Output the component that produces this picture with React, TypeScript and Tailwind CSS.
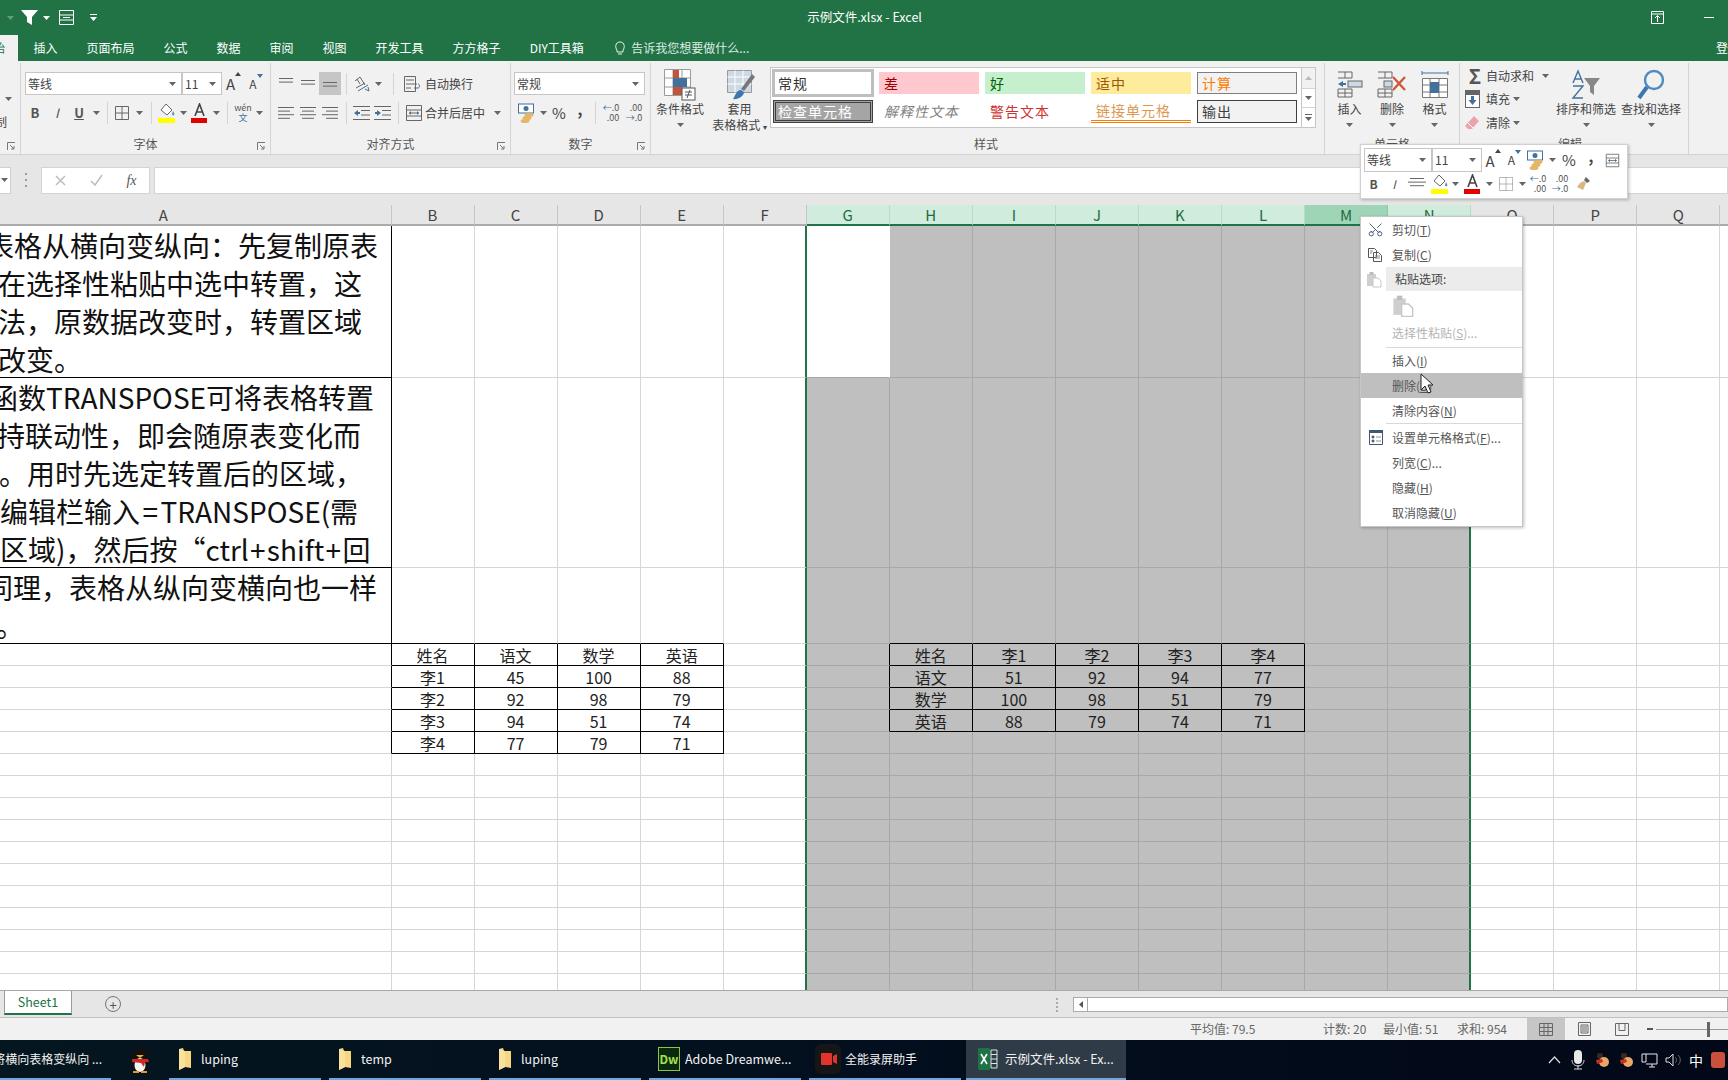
import { ReactNode } from 'react'
import { Scissors } from 'lucide-react'

const COLS = ['A', 'B', 'C', 'D', 'E', 'F', 'G', 'H', 'I', 'J', 'K', 'L', 'M', 'N', 'O', 'P', 'Q', 'R']
const GRID = 'grid grid-cols-[391.5px_repeat(17,83.05px)]'

const rowHeights = [
  'h-[152px]', 'h-[189.5px]', 'h-[76px]',
  ...Array.from({ length: 16 }, () => 'h-[22.05px]'),
]

const Eq = ({ c }: { c: string }) => <span className="mx-[1.25px]">{c}</span>

const cellLines: { text: ReactNode; ml: string }[][] = [
  [
    { text: '表格从横向变纵向：先复制原表', ml: '-ml-[14px]' },
    { text: '在选择性粘贴中选中转置，这', ml: '-ml-[2px]' },
    { text: '法，原数据改变时，转置区域', ml: '-ml-[2px]' },
    { text: '改变。', ml: '-ml-[2px]' },
  ],
  [
    { text: '函数TRANSPOSE可将表格转置', ml: '-ml-[10px]' },
    { text: '持联动性，即会随原表变化而', ml: '-ml-[3px]' },
    { text: '。用时先选定转置后的区域，', ml: '-ml-[1px]' },
    { text: <>编辑栏输入<span className="mx-[2.5px]">=</span>TRANSPOSE(需</>, ml: 'ml-0' },
    { text: <>区域)，然后按“ctrl<Eq c="+" />shift<Eq c="+" />回</>, ml: 'ml-0' },
  ],
  [
    { text: '同理，表格从纵向变横向也一样', ml: '-ml-[15px]' },
    { text: '。', ml: '-ml-[4px]' },
  ],
]

// row index -> col index -> text
const tableText: Record<number, Record<number, string>> = {
  3: { 1: '姓名', 2: '语文', 3: '数学', 4: '英语', 7: '姓名', 8: '李1', 9: '李2', 10: '李3', 11: '李4' },
  4: { 1: '李1', 2: '45', 3: '100', 4: '88', 7: '语文', 8: '51', 9: '92', 10: '94', 11: '77' },
  5: { 1: '李2', 2: '92', 3: '98', 4: '79', 7: '数学', 8: '100', 9: '98', 10: '51', 11: '79' },
  6: { 1: '李3', 2: '94', 3: '51', 4: '74', 7: '英语', 8: '88', 9: '79', 10: '74', 11: '71' },
  7: { 1: '李4', 2: '77', 3: '79', 4: '71' },
}

const inLeft = (r: number, c: number) => r >= 3 && r <= 7 && c >= 1 && c <= 4
const inRight = (r: number, c: number) => r >= 3 && r <= 6 && c >= 7 && c <= 11

function cellClass(r: number, c: number) {
  const sel = c >= 6 && c <= 13
  const active = r === 0 && c === 6
  const bg = active ? 'bg-white' : sel ? 'bg-[#bfbfbf]' : 'bg-white'

  let right = sel ? 'border-r border-r-[#a8a8a8]' : 'border-r border-r-[#d6d6d6]'
  if (active) right = 'border-r border-r-white'
  if (c === 0 && r <= 7) right = 'border-r border-r-black'
  if (inLeft(r, c) || inRight(r, c) || (c === 6 && r >= 3 && r <= 6)) right = 'border-r border-r-black'
  if (c === 5) right = 'border-r-2 border-r-[#217346]'
  if (c === 13) right = 'border-r-2 border-r-[#217346]'

  let bottom = sel ? 'border-b border-b-[#a8a8a8]' : 'border-b border-b-[#d6d6d6]'
  if (c === 0 && r <= 2) bottom = 'border-b border-b-black'
  if (inLeft(r, c) || inRight(r, c)) bottom = 'border-b border-b-black'
  if (r === 2 && ((c >= 1 && c <= 4) || (c >= 7 && c <= 11))) bottom = 'border-b border-b-black'

  return `${bg} ${right} ${bottom}`
}

const Caret = ({ fill = '#666' }: { fill?: string }) => (
  <svg width="7" height="4" viewBox="0 0 7 4">
    <path d="M0 0h7L3.5 4z" fill={fill} />
  </svg>
)

function Slot({ w, children, className = '' }: { w: string; children?: ReactNode; className?: string }) {
  return <div className={`flex h-full shrink-0 items-center justify-center ${w} ${className}`}>{children}</div>
}

const Sep = ({ w }: { w: string }) => (
  <Slot w={w}>
    <div className="h-[22px] w-px bg-[#d4d4d4]" />
  </Slot>
)

function Lines({ rows, color = '#666' }: { rows: [number, number][]; color?: string }) {
  return (
    <svg width="18" height="14" viewBox="0 0 18 14">
      {rows.map(([x, w], i) => (
        <rect key={i} x={x} y={1 + i * 3.6} width={w} height="1" fill={color} />
      ))}
    </svg>
  )
}

const BigA = ({ size, up }: { size: string; up: boolean }) => (
  <span className="relative flex items-end">
    <span className={`${size} leading-none text-[#444]`}>A</span>
    <svg className="-mt-1 self-start" width="6" height="4" viewBox="0 0 6 4">
      <path d={up ? 'M0 4h6L3 0z' : 'M0 0h6L3 4z'} fill={up ? '#444' : '#41719c'} />
    </svg>
  </span>
)

const FillIcon = () => (
  <svg width="18" height="20" viewBox="0 0 18 20">
    <path d="M8 1l6 6-5 5-6-5z" fill="#fff" stroke="#666" />
    <path d="M15 8c1 2 2 3 1 4s-2 0-2-1z" fill="#5b8fbd" />
    <rect x="0" y="15" width="17" height="5" fill="#ffff00" />
  </svg>
)
const ColorA = () => (
  <svg width="17" height="20" viewBox="0 0 17 20">
    <path d="M4 13L8.5 1 13 13M5.5 9h6" fill="none" stroke="#444" strokeWidth="1.6" />
    <rect x="0" y="15" width="16" height="5" fill="#e30000" />
  </svg>
)
const BorderIcon = () => (
  <svg width="14" height="14" viewBox="0 0 14 14">
    <path d="M.5.5h13v13H.5zM7 .5v13M.5 7h13" fill="none" stroke="#666" />
  </svg>
)
const MoneyIcon = () => (
  <svg width="19" height="20" viewBox="0 0 19 20">
    <rect x=".5" y="1" width="15" height="9" fill="#fff" stroke="#41719c" />
    <circle cx="8" cy="5.5" r="2.5" fill="#41719c" />
    <ellipse cx="11" cy="12" rx="4.5" ry="2" fill="#e6b566" />
    <ellipse cx="9" cy="15" rx="4.5" ry="2" fill="#e6b566" />
    <ellipse cx="7" cy="18" rx="4.5" ry="2" fill="#e6b566" />
  </svg>
)
const DecInc = ({ flip }: { flip?: boolean }) => (
  <span className="flex flex-col items-end text-[9px] leading-[10px] text-[#555]">
    <span>{flip ? '.00' : <><span className="text-[#41719c]">←</span>.0</>}</span>
    <span>{flip ? <><span className="text-[#41719c]">→</span>.0</> : '.00'}</span>
  </span>
)
const Launcher = () => (
  <svg className="absolute bottom-[3px] right-[4px]" width="9" height="9" viewBox="0 0 9 9">
    <path d="M.5 8V.5H8M3 3l4 4M7 4v3H4" fill="none" stroke="#777" />
  </svg>
)
const MergeIcon = ({ size = 18 }: { size?: number }) => (
  <svg width={size} height={size} viewBox="0 0 18 18">
    <path d="M1.5 1.5h15v15h-15zM1.5 6h15M1.5 12h15M4 9h10" fill="none" stroke="#666" />
    <path d="M4 9l2-2v4zM14 9l-2-2v4z" fill="#41719c" />
  </svg>
)

function Group({ w, label, launcher, children }: { w: string; label: string; launcher?: boolean; children: ReactNode }) {
  return (
    <div className={`relative flex h-[91px] shrink-0 flex-col border-r border-[#d4d4d4] pt-[9px] ${w}`}>
      <div className="flex h-[23px] items-center">{Array.isArray(children) ? children[0] : children}</div>
      <div className="mt-[6px] flex h-[24px] items-center">{Array.isArray(children) ? children[1] : null}</div>
      <div className="mt-auto h-[20px] text-center text-[12px] leading-[20px] text-[#555]">{label}</div>
      {launcher && <Launcher />}
    </div>
  )
}

function BigButton({ w, icon, lines, caretLine }: { w: string; icon: ReactNode; lines: ReactNode[]; caretLine?: boolean }) {
  return (
    <div className={`flex shrink-0 flex-col items-center ${w}`}>
      <div className="flex h-[32px] w-full items-center justify-center">{icon}</div>
      {lines.map((l, i) => (
        <div key={i} className="whitespace-nowrap text-center text-[12px] leading-[16px] text-[#444]">
          {l}
        </div>
      ))}
      {caretLine && (
        <div className="flex h-[16px] items-center">
          <Caret />
        </div>
      )}
    </div>
  )
}

const ComboBox = ({ w, text }: { w: string; text: string }) => (
  <div className={`flex h-full shrink-0 items-center justify-between border border-[#c6c6c6] bg-white pl-[2px] pr-[5px] text-[12px] text-[#444] ${w}`}>
    <span>{text}</span>
    <Caret />
  </div>
)

function Ribbon() {
  return (
    <div className="flex h-[94px] shrink-0 border-b border-[#d2d2d2] bg-[#f1f1f1] pt-[2px]">
      <div className="relative h-[91px] w-[21px] shrink-0 overflow-hidden border-r border-[#d4d4d4] text-[12px] text-[#444]">
        <div className="absolute left-[5px] top-[34px]"><Caret /></div>
        <div className="absolute -left-[5px] top-[50px]">制</div>
        <Launcher />
      </div>

      <Group w="w-[250px]" label="字体" launcher>
        <>
          <div className="ml-[4px]" />
          <ComboBox w="w-[157px]" text="等线" />
          <ComboBox w="w-[40px]" text="11" />
          <Slot w="w-[23px]"><BigA size="text-[15px]" up /></Slot>
          <Slot w="w-[22px]"><BigA size="text-[12px]" up={false} /></Slot>
        </>
        <>
          <div className="ml-[3px]" />
          <Slot w="w-[22px]" className="text-[13px] font-bold text-[#555]">B</Slot>
          <Slot w="w-[22px]" className="text-[13px] italic text-[#555]">I</Slot>
          <Slot w="w-[22px]" className="text-[13px] font-bold text-[#555] underline">U</Slot>
          <Slot w="w-[12px]"><Caret /></Slot>
          <Sep w="w-[10px]" />
          <Slot w="w-[20px]"><BorderIcon /></Slot>
          <Slot w="w-[14px]"><Caret /></Slot>
          <Sep w="w-[10px]" />
          <Slot w="w-[22px]"><FillIcon /></Slot>
          <Slot w="w-[10px]"><Caret /></Slot>
          <Slot w="w-[22px]"><ColorA /></Slot>
          <Slot w="w-[12px]"><Caret /></Slot>
          <Sep w="w-[10px]" />
          <Slot w="w-[22px]">
            <span className="flex flex-col items-center text-[9px] leading-[10px] text-[#555]">
              <span>wén</span>
              <span className="text-[#41719c]">文</span>
            </span>
          </Slot>
          <Slot w="w-[10px]"><Caret /></Slot>
        </>
      </Group>

      <Group w="w-[240px]" label="对齐方式" launcher>
        <>
          <div className="ml-[4px]" />
          <Slot w="w-[22px]"><Lines rows={[[2, 14], [2, 14]]} /></Slot>
          <Slot w="w-[22px]"><div className="mt-1"><Lines rows={[[2, 14], [2, 14]]} /></div></Slot>
          <Slot w="w-[22px]" className="bg-[#c6c6c6]"><div className="mt-2"><Lines rows={[[2, 14], [2, 14]]} /></div></Slot>
          <Sep w="w-[10px]" />
          <Slot w="w-[22px]">
            <svg width="18" height="16" viewBox="0 0 18 16">
              <path d="M2 5l5-4 5 8M4 3l3 5M3 12l9-5M12 13l4 2-1-4" fill="none" stroke="#666" />
              <path d="M5 15L15 9" stroke="#41719c" />
            </svg>
          </Slot>
          <Slot w="w-[10px]"><Caret /></Slot>
          <Sep w="w-[20px]" />
          <Slot w="w-[18px]">
            <svg width="17" height="16" viewBox="0 0 17 16">
              <path d="M.5.5h11v15H.5zM2 4h8M2 8h11M2 12h5" fill="none" stroke="#666" />
              <path d="M14 8c2 0 2 4 0 4h-4" fill="none" stroke="#41719c" />
            </svg>
          </Slot>
          <span className="ml-[4px] whitespace-nowrap text-[12px] text-[#444]">自动换行</span>
        </>
        <>
          <div className="ml-[4px]" />
          <Slot w="w-[22px]"><Lines rows={[[1, 16], [1, 12], [1, 16], [1, 12]]} /></Slot>
          <Slot w="w-[22px]"><Lines rows={[[1, 16], [3, 12], [1, 16], [3, 12]]} /></Slot>
          <Slot w="w-[22px]"><Lines rows={[[1, 16], [5, 12], [1, 16], [5, 12]]} /></Slot>
          <Sep w="w-[10px]" />
          <Slot w="w-[21px]">
            <svg width="18" height="14" viewBox="0 0 18 14">
              <path d="M0 .5h17M8 4.5h9M8 9h9M0 13.5h17" stroke="#666" />
              <path d="M1 7l4-3v2h2v2H5v2z" fill="#41719c" />
            </svg>
          </Slot>
          <Slot w="w-[21px]">
            <svg width="18" height="14" viewBox="0 0 18 14">
              <path d="M0 .5h17M8 4.5h9M8 9h9M0 13.5h17" stroke="#666" />
              <path d="M7 7L3 4v2H1v2h2v2z" fill="#41719c" />
            </svg>
          </Slot>
          <Sep w="w-[10px]" />
          <Slot w="w-[22px]"><MergeIcon /></Slot>
          <span className="whitespace-nowrap text-[12px] text-[#444]">合并后居中</span>
          <Slot w="w-[24px]"><Caret /></Slot>
        </>
      </Group>

      <Group w="w-[140px]" label="数字" launcher>
        <>
          <div className="ml-[3px]" />
          <ComboBox w="w-[131px]" text="常规" />
        </>
        <>
          <div className="ml-[5px]" />
          <Slot w="w-[22px]"><MoneyIcon /></Slot>
          <Slot w="w-[10px]"><Caret /></Slot>
          <Slot w="w-[22px]" className="text-[15px] text-[#444]">%</Slot>
          <Slot w="w-[20px]" className="pb-2 text-[15px] font-bold text-[#444]">,</Slot>
          <Sep w="w-[10px]" />
          <Slot w="w-[22px]"><DecInc /></Slot>
          <Slot w="w-[24px]"><DecInc flip /></Slot>
        </>
      </Group>

      <div className="relative flex h-[91px] w-[674px] shrink-0 border-r border-[#d4d4d4] pt-[3px]">
        <div className="flex w-[119px] shrink-0 pt-[3px]">
          <BigButton
            w="w-[58px]"
            caretLine
            lines={['条件格式']}
            icon={
              <svg width="32" height="32" viewBox="0 0 32 32">
                <path d="M.5.5h26v26H.5zM9 .5v26M18 .5v26M.5 9h26M.5 18h26" fill="#fff" stroke="#9a9a9a" />
                <rect x="9" y="1" width="6" height="8" fill="#c0553a" />
                <rect x="9" y="9" width="14" height="9" fill="#41719c" />
                <rect x="9" y="18" width="9" height="8" fill="#c0553a" />
                <rect x="18" y="19" width="13" height="12" fill="#fff" stroke="#555" />
                <path d="M21 23h7M21 26h7M26 21l-3 8" stroke="#555" fill="none" />
              </svg>
            }
          />
          <BigButton
            w="w-[61px]"
            lines={['套用', <span key="a">表格格式 <span className="text-[8px]">▾</span></span>]}
            icon={
              <svg width="32" height="32" viewBox="0 0 32 32">
                <path d="M3.5 1.5h24v22h-24z" fill="#cfd9e6" stroke="#9a9a9a" />
                <path d="M3.5 8h24M3.5 15h24M11 1.5v22M19 1.5v22" stroke="#fff" />
                <path d="M28 5l3 3-11 14-3-2z" fill="#777" />
                <path d="M17 21c-4 0-5 4-8 9 5 1 11-3 11-7z" fill="#3c78b0" />
              </svg>
            }
          />
        </div>
        <div className="mt-[1px] flex h-[61px] w-[546px] border border-[#c6c6c6] bg-white">
          <div className="grid w-[532px] grid-cols-[100px_100px_100px_100px_100px] grid-rows-[22px_23px] gap-x-[6px] gap-y-[6px] pl-[2px] pt-[4px] text-[14px] tracking-[1px]">
            <div className="-mx-[1px] -my-[3px] flex items-center border-[3px] border-[#bfbfbf] bg-white pl-[3px] text-[#333]">常规</div>
            <div className="flex items-center bg-[#ffc7ce] pl-[5px] text-[#9c0006]">差</div>
            <div className="flex items-center bg-[#c6efce] pl-[5px] text-[#006100]">好</div>
            <div className="flex items-center bg-[#ffeb9c] pl-[5px] text-[#9c5700]">适中</div>
            <div className="flex items-center border border-[#7f7f7f] bg-[#f2f2f2] pl-[4px] text-[#fa7d00]">计算</div>
            <div className="flex items-center border-[3px] border-double border-[#3f3f3f] bg-[#a5a5a5] pl-[2px] text-white">检查单元格</div>
            <div className="flex items-center pl-[5px] italic text-[#7f7f7f]">解释性文本</div>
            <div className="flex items-center pl-[5px] text-[#d03030]">警告文本</div>
            <div className="flex items-center border-b-[3px] border-double border-[#fa7d00] pl-[5px] text-[#dd9850]">链接单元格</div>
            <div className="flex items-center border-[1.5px] border-[#3f3f3f] bg-[#f2f2f2] pl-[4px] text-[#3f3f3f]">输出</div>
          </div>
          <div className="flex w-[14px] flex-col border-l border-[#c6c6c6]">
            <div className="flex h-[21px] items-center justify-center border-b border-[#d4d4d4] bg-[#f1f1f1]">
              <svg width="7" height="4" viewBox="0 0 7 4"><path d="M0 4h7L3.5 0z" fill="#bbb" /></svg>
            </div>
            <div className="flex h-[19px] items-center justify-center border-b border-[#d4d4d4]"><Caret /></div>
            <div className="flex flex-1 flex-col items-center justify-center gap-[2px]">
              <div className="h-px w-[7px] bg-[#666]" />
              <Caret />
            </div>
          </div>
        </div>
        <div className="absolute bottom-0 left-[323px] whitespace-nowrap text-[12px] leading-[20px] text-[#555]">样式</div>
      </div>

      <div className="relative flex h-[91px] w-[135px] shrink-0 border-r border-[#d4d4d4] pl-[3px] pt-[6px]">
        <BigButton
          w="w-[43px]"
          caretLine
          lines={['插入']}
          icon={
            <svg width="26" height="28" viewBox="0 0 26 28">
              <path d="M1 1h14v6H1M8 1v6M1 18h14v8H1zM8 18v8M1 22h14" fill="none" stroke="#666" />
              <rect x="11" y="10" width="14" height="6" fill="#cfd9e6" stroke="#666" />
              <path d="M1 13l5-3v2h3v2H6v2z" fill="#41719c" />
            </svg>
          }
        />
        <BigButton
          w="w-[42px]"
          caretLine
          lines={['删除']}
          icon={
            <svg width="30" height="28" viewBox="0 0 30 28">
              <path d="M1 1h14v6H1M8 1v6M1 18h14v8H1zM8 18v8M1 22h14" fill="none" stroke="#666" />
              <rect x="7" y="10" width="8" height="6" fill="#cfd9e6" stroke="#666" />
              <path d="M16 6l12 13M28 6L16 19" stroke="#d0583a" strokeWidth="2.4" />
            </svg>
          }
        />
        <BigButton
          w="w-[43px]"
          caretLine
          lines={['格式']}
          icon={
            <svg width="28" height="30" viewBox="0 0 28 30">
              <path d="M1 3h26M1 1v4M27 1v4" stroke="#41719c" fill="none" />
              <path d="M1.5 8.5h25v19h-25zM9 8.5v19M18 8.5v19M1.5 15h25M1.5 22h25" fill="#fff" stroke="#777" />
              <rect x="9" y="12" width="9" height="11" fill="#41719c" />
            </svg>
          }
        />
        <div className="absolute bottom-0 left-0 w-full text-center text-[12px] leading-[20px] text-[#555]">单元格</div>
      </div>

      <div className="relative flex h-[91px] w-[229px] shrink-0 border-r border-[#d4d4d4] pt-[1px]">
        <div className="w-[93px] shrink-0 text-[12px] text-[#444]">
          <div className="flex h-[23px] items-center pl-[4px]">
            <span className="w-[22px] text-center text-[20px] font-bold leading-none text-[#555]">Σ</span>
            <span>自动求和</span>
            <span className="ml-[8px]"><Caret /></span>
          </div>
          <div className="flex h-[24px] items-center pl-[5px]">
            <svg className="mr-[6px]" width="15" height="18" viewBox="0 0 15 18">
              <rect x=".5" y=".5" width="14" height="17" fill="#fff" stroke="#666" />
              <rect x="1" y="1" width="13" height="4" fill="#666" />
              <path d="M7.5 15l-4-5h2.500V6h3v4h2.500z" fill="#41719c" />
            </svg>
            <span>填充</span>
            <span className="ml-[3px]"><Caret /></span>
          </div>
          <div className="flex h-[24px] items-center pl-[5px]">
            <svg className="mr-[6px]" width="15" height="16" viewBox="0 0 15 16">
              <path d="M9 1l5 5-7 8H3l-3-3z" fill="#eda3ad" />
              <path d="M3 8l5 5" stroke="#fff" />
            </svg>
            <span>清除</span>
            <span className="ml-[3px]"><Caret /></span>
          </div>
        </div>
        <div className="pt-[5px]">
          <BigButton
            w="w-[66px]"
            caretLine
            lines={['排序和筛选']}
            icon={
              <svg width="32" height="32" viewBox="0 0 32 32">
                <path d="M3 14L8 2l5 12M5 10h6M3 17h10L3 29h10" fill="none" stroke="#41719c" strokeWidth="1.4" />
                <path d="M14 9h16l-6 8v9l-4-3v-6z" fill="#888" />
              </svg>
            }
          />
        </div>
        <div className="pt-[5px]">
          <BigButton
            w="w-[64px]"
            caretLine
            lines={['查找和选择']}
            icon={
              <svg width="30" height="32" viewBox="0 0 30 32">
                <circle cx="18" cy="11" r="9" fill="none" stroke="#4f8ac0" strokeWidth="2.4" />
                <path d="M11 18L3 29" stroke="#3c78b0" strokeWidth="4" />
              </svg>
            }
          />
        </div>
        <div className="absolute bottom-0 left-[80px] w-[60px] text-center text-[12px] leading-[20px] text-[#555]">编辑</div>
      </div>
    </div>
  )
}

function Sheet() {
  return (
    <div className="h-[764px] shrink-0 overflow-hidden bg-white">
      <div className={GRID}>
        {rowHeights.map((h, r) =>
          COLS.map((_, c) => (
            <div key={`${r}-${c}`} className={`${h} ${cellClass(r, c)} overflow-hidden`}>
              {c === 0 && r < 3 && (
                <div className="text-[28px] leading-[38px] text-[#111]">
                  {cellLines[r].map((l, i) => (
                    <div key={i} className={`whitespace-nowrap ${l.ml}`}>{l.text}</div>
                  ))}
                </div>
              )}
              {tableText[r]?.[c] && (
                <div className="text-center text-[16px] leading-[22px] text-[#222]">{tableText[r][c]}</div>
              )}
            </div>
          ))
        )}
      </div>
    </div>
  )
}

function MenuRow({ icon, children, className = '' }: { icon?: ReactNode; children: ReactNode; className?: string }) {
  return (
    <div className={`flex h-[25px] items-center text-[12px] text-[#555] ${className}`}>
      <div className="flex w-[29px] shrink-0 justify-center">{icon}</div>
      <div className="whitespace-nowrap pl-[2px]">{children}</div>
    </div>
  )
}

const PasteIcon = ({ big }: { big?: boolean }) => (
  <svg width={big ? 22 : 16} height={big ? 24 : 17} viewBox="0 0 16 17">
    <path d="M1 3h9v12H1z" fill="#cfcfcf" />
    <rect x="3.500" y="1" width="4" height="3" fill="#bdbdbd" />
    <path d="M7 7h5l3 3v6H7z" fill="#fff" stroke="#c6c6c6" />
  </svg>
)

function ContextMenu() {
  return (
    <div className="absolute left-[1360px] top-[216px] h-[311px] w-[163px] border border-[#c6c6c6] bg-white shadow-[1px_1px_3px_rgba(0,0,0,0.25)]">
      <MenuRow icon={<Scissors size={17} strokeWidth={1.3} color="#41557a" className="-rotate-90" />}>
        剪切(<u>T</u>)
      </MenuRow>
      <MenuRow
        icon={
          <svg width="15" height="14" viewBox="0 0 15 14">
            <path d="M.5.5h6l2 2v7h-8zM5.500 4.500h5l3 3v6h-8z" fill="#fff" stroke="#555" />
            <path d="M7 8h5M7 10h5M2 3h3M2 5h2" stroke="#888" />
          </svg>
        }
      >
        复制(<u>C</u>)
      </MenuRow>
      <div className="flex h-[24px] items-center">
        <div className="flex w-[25px] shrink-0 justify-center"><PasteIcon /></div>
        <div className="flex h-full flex-1 items-center bg-[#ececec] pl-[9px] text-[12px] text-[#444]">粘贴选项:</div>
      </div>
      <div className="flex h-[29px] items-center pl-[31px]"><PasteIcon big /></div>
      <MenuRow className="text-[#b4b4b4]">选择性粘贴(<u>S</u>)...</MenuRow>
      <div className="ml-[25px] mt-[2px] h-px bg-[#d8d8d8]" />
      <MenuRow>插入(<u>I</u>)</MenuRow>
      <MenuRow className="bg-[#bfbfbf] text-[#333]">删除(<u>D</u>)</MenuRow>
      <MenuRow>清除内容(<u>N</u>)</MenuRow>
      <div className="mb-[1px] ml-[25px] h-px bg-[#d8d8d8]" />
      <MenuRow
        icon={
          <svg width="14" height="15" viewBox="0 0 14 15">
            <path d="M.5.5h13v14H.5z" fill="#fff" stroke="#41557a" />
            <rect x="0" y="0" width="14" height="3" fill="#41557a" />
            <path d="M3 6h2v2H3zM3 10h2v2H3zM7 7h5M7 11h5" fill="#41557a" stroke="#666" strokeWidth=".7" />
          </svg>
        }
      >
        设置单元格格式(<u>F</u>)...
      </MenuRow>
      <MenuRow>列宽(<u>C</u>)...</MenuRow>
      <MenuRow>隐藏(<u>H</u>)</MenuRow>
      <MenuRow>取消隐藏(<u>U</u>)</MenuRow>
    </div>
  )
}

function MiniToolbar() {
  return (
    <div className="absolute left-[1360px] top-[144px] h-[55px] w-[268px] border border-[#d0d0d0] bg-white pl-[3px] pt-[3px] shadow-[1px_1px_3px_rgba(0,0,0,0.25)]">
      <div className="flex h-[24px] items-center">
        <ComboBox w="w-[68px]" text="等线" />
        <ComboBox w="w-[50px]" text="11" />
        <Slot w="w-[22px]"><BigA size="text-[15px]" up /></Slot>
        <Slot w="w-[21px]"><BigA size="text-[12px]" up={false} /></Slot>
        <Slot w="w-[22px]"><MoneyIcon /></Slot>
        <Slot w="w-[10px]"><Caret /></Slot>
        <Slot w="w-[24px]" className="text-[15px] text-[#444]">%</Slot>
        <Slot w="w-[20px]" className="pb-2 text-[15px] font-bold text-[#444]">,</Slot>
        <Slot w="w-[22px]"><MergeIcon size={15} /></Slot>
      </div>
      <div className="flex h-[24px] items-center">
        <Slot w="w-[19px]" className="text-[12px] font-bold text-[#555]">B</Slot>
        <Slot w="w-[22px]" className="text-[12px] italic text-[#555]">I</Slot>
        <Slot w="w-[24px]"><Lines rows={[[2, 14], [0, 18], [2, 14]]} /></Slot>
        <Slot w="w-[22px]"><FillIcon /></Slot>
        <Slot w="w-[8px]"><Caret /></Slot>
        <Slot w="w-[26px]"><ColorA /></Slot>
        <Slot w="w-[8px]"><Caret /></Slot>
        <Slot w="w-[25px]">
          <svg width="14" height="14" viewBox="0 0 14 14">
            <path d="M.5.5h13v13H.5zM7 .5v13M.5 7h13" fill="none" stroke="#777" strokeDasharray="1 1" />
          </svg>
        </Slot>
        <Slot w="w-[9px]"><Caret /></Slot>
        <Slot w="w-[22px]"><DecInc /></Slot>
        <Slot w="w-[22px]"><DecInc flip /></Slot>
        <Slot w="w-[24px]">
          <svg width="16" height="16" viewBox="0 0 16 16">
            <path d="M11 1l4 4-3 2-3-3z" fill="#666" />
            <path d="M9 5l2 2-3 7-6-3 3-4z" fill="#d8b685" />
          </svg>
        </Slot>
      </div>
    </div>
  )
}

const Folder = () => (
  <svg width="14" height="24" viewBox="0 0 14 24">
    <path d="M1 2l4-1 1 3h7v17l-6-1-6 3z" fill="#f6d77f" />
    <path d="M1 2v21l6-3V4z" fill="#f9e29e" />
  </svg>
)

function TaskItem({ icon, text, gap = 'gap-[9px]' }: { icon: ReactNode; text: string; gap?: string }) {
  return (
    <div className={`flex h-full w-[152px] shrink-0 items-center border-b-2 border-[#6fa8dc] pl-[9px] ${gap}`}>
      {icon}
      <span className="truncate text-[12.5px] text-[#f2f2f2]">{text}</span>
    </div>
  )
}

const Bird = () => (
  <svg width="16" height="16" viewBox="0 0 16 16">
    <circle cx="6" cy="4" r="3" fill="#3a2a20" />
    <circle cx="10" cy="10" r="5" fill="#e8a868" />
    <path d="M2 8l6-1 1 3-6 2z" fill="#c9301f" />
  </svg>
)

function Taskbar() {
  return (
    <div className="flex h-[40px] shrink-0 bg-linear-to-r from-[#04161f] via-[#030f1e] to-[#020817]">
      <div className="flex h-full w-[111px] shrink-0 items-center justify-end overflow-hidden whitespace-nowrap border-b-2 border-[#6fa8dc] pr-[9px] text-[12px] text-[#f2f2f2]">
        将横向表格变纵向 ...
      </div>
      <Slot w="w-[58px]">
        <svg width="22" height="28" viewBox="0 0 22 28">
          <ellipse cx="11" cy="9" rx="7" ry="8" fill="#111" />
          <ellipse cx="11" cy="18" rx="8" ry="9" fill="#111" />
          <ellipse cx="11" cy="19" rx="5.500" ry="7" fill="#f4f4f4" />
          <path d="M3 13h16l1 3-4 0-1 5-3-4-9-1z" fill="#d0281e" />
          <path d="M7 9h8l-4 3z" fill="#f0b020" />
          <path d="M4 26h6M12 26h6" stroke="#e89a20" strokeWidth="2" />
        </svg>
      </Slot>
      <div className="flex h-full shrink-0 gap-[8px]">
        <TaskItem icon={<Folder />} text="luping" />
        <TaskItem icon={<Folder />} text="temp" />
        <TaskItem icon={<Folder />} text="luping" />
        <TaskItem
          gap="gap-[5px]"
          icon={
            <div className="flex h-[24px] w-[22px] shrink-0 items-center justify-center border border-[#8cc63f] bg-[#0a2a10] text-[12px] font-bold leading-none text-[#a6e04a]">Dw</div>
          }
          text="Adobe Dreamwe..."
        />
        <div className="flex h-full w-[152px] shrink-0 items-center gap-[4px] border-b-2 border-[#6fa8dc] pl-[6px]">
          <svg width="26" height="30" viewBox="0 0 26 30">
            <rect x="0" y="0" width="26" height="30" rx="6" fill="#161616" />
            <rect x="6" y="9" width="11" height="12" rx="1" fill="#e0342c" />
            <path d="M18 12l4-2v10l-4-2z" fill="#e0342c" />
          </svg>
          <span className="text-[12px] text-[#f2f2f2]">全能录屏助手</span>
        </div>
        <div className="-ml-[3px] flex h-full w-[160px] shrink-0 items-center gap-[7px] border-b-2 border-[#6fa8dc] bg-[#2f3c48] pl-[12px]">
          <svg width="20" height="24" viewBox="0 0 20 24">
            <rect x="0" y="1" width="12" height="22" rx="1" fill="#1f7246" />
            <path d="M3 7l6 10M9 7l-6 10" stroke="#fff" strokeWidth="1.6" />
            <path d="M13 3h6v18h-6zM13 7.500h6M13 12h6M13 16.500h6" fill="none" stroke="#d8e8dc" />
          </svg>
          <span className="whitespace-nowrap text-[12.5px] text-[#f2f2f2]">示例文件.xlsx - Ex...</span>
        </div>
      </div>
      <div className="ml-auto flex h-full items-center">
        <Slot w="w-[23px]">
          <svg width="13" height="8" viewBox="0 0 13 8"><path d="M1 7l5.500-6L12 7" fill="none" stroke="#ddd" strokeWidth="1.200" /></svg>
        </Slot>
        <Slot w="w-[24px]">
          <svg width="14" height="20" viewBox="0 0 14 20">
            <rect x="3" y="0" width="8" height="14" rx="4" fill="#e8e8e8" />
            <path d="M1 10c0 8 12 8 12 0M7 15v4M3 19h8" fill="none" stroke="#ddd" />
          </svg>
        </Slot>
        <Slot w="w-[24px]"><Bird /></Slot>
        <Slot w="w-[23px]"><Bird /></Slot>
        <Slot w="w-[24px]">
          <svg width="17" height="15" viewBox="0 0 17 15">
            <path d="M5 1h11v10H5M8 14h6M11 11v3M1 1h4v8H1z" fill="none" stroke="#e8e8e8" />
          </svg>
        </Slot>
        <Slot w="w-[23px]">
          <svg width="16" height="14" viewBox="0 0 16 14">
            <path d="M1 5h3l4-4v12L4 9H1z" fill="none" stroke="#ddd" />
            <path d="M10 4c2 2 2 4 0 6M13 2c3 3 3 7 0 10" fill="none" stroke="#667" />
          </svg>
        </Slot>
        <Slot w="w-[24px]" className="text-[14px] text-white">中</Slot>
        <Slot w="w-[20px]">
          <div className="h-[16px] w-[14px] rounded-[3px] bg-[#c8503c]" />
        </Slot>
      </div>
    </div>
  )
}

export default function App() {
  return (
    <div className="relative flex h-[1080px] w-[1728px] flex-col overflow-hidden bg-white font-['Noto_Sans_CJK_SC','Noto_Sans',sans-serif]">
      {/* 标题栏 */}
      <div className="h-[61px] shrink-0 bg-[#217346] text-white">
        <div className="flex h-[35px] items-center">
          <Slot w="w-[20px]" className="opacity-30"><Caret fill="#fff" /></Slot>
          <Slot w="w-[18px]">
            <svg width="17" height="17" viewBox="0 0 17 17"><path d="M0 1h17l-6 7v8l-5-3V8z" fill="#fff" /></svg>
          </Slot>
          <Slot w="w-[16px]"><Caret fill="#fff" /></Slot>
          <Slot w="w-[24px]">
            <svg width="15" height="15" viewBox="0 0 15 15">
              <path d="M.5.5h14v14H.5zM.5 5h14M.5 10h14M4 7.500h7" fill="none" stroke="#fff" />
            </svg>
          </Slot>
          <Slot w="w-[30px]">
            <svg width="7" height="7" viewBox="0 0 7 7"><path d="M0 0h7v1H0zM0 3h7L3.500 7z" fill="#fff" /></svg>
          </Slot>
          <div className="flex-1 pr-[30px] text-center text-[12.5px]">示例文件.xlsx - Excel</div>
          <svg className="mr-[40px]" width="13" height="13" viewBox="0 0 13 13">
            <path d="M.5.5h12v12H.5zM.5 3h12M6.500 11V5M4 7l2.500-2.500L9 7" fill="none" stroke="#fff" />
          </svg>
          <div className="mr-[14px] h-px w-[10px] bg-white" />
        </div>
        <div className="flex h-[26px] items-center text-[12px]">
          <div className="flex h-full w-[18px] items-center justify-end overflow-hidden bg-[#f1f1f1] pr-[13px] text-[#217346]">
            <span className="shrink-0 whitespace-nowrap">始</span>
          </div>
          <div className="flex items-center pl-[1px]">
            {['插入', '页面布局', '公式', '数据', '审阅', '视图', '开发工具', '方方格子', 'DIY工具箱'].map((t) => (
              <span key={t} className="whitespace-nowrap px-[14.5px]">{t}</span>
            ))}
          </div>
          <svg className="ml-[17px]" width="10" height="14" viewBox="0 0 10 14">
            <path d="M2 9C0 7 0 1 5 1s5 6 3 8v2H2zM3 13h4" fill="none" stroke="#e8f2ec" />
          </svg>
          <span className="ml-[6px] text-[#dcebe2]">告诉我您想要做什么...</span>
          <span className="ml-auto">登</span>
        </div>
      </div>

      <Ribbon />

      {/* 编辑栏 */}
      <div className="flex h-[50px] shrink-0 items-center gap-[4px] bg-[#e6e6e6]">
        <div className="flex h-[27px] w-[11px] items-center justify-end border border-l-0 border-[#d0d0d0] bg-white pr-[2px]">
          <Caret />
        </div>
        <div className="mx-[10px] flex h-[14px] flex-col justify-between">
          <div className="h-[2px] w-[2px] bg-[#999]" />
          <div className="h-[2px] w-[2px] bg-[#999]" />
          <div className="h-[2px] w-[2px] bg-[#999]" />
        </div>
        <div className="flex h-[27px] w-[109px] items-center border border-[#d4d4d4] bg-white text-[#bbb]">
          <Slot w="w-[36px]">
            <svg width="11" height="11" viewBox="0 0 11 11"><path d="M1 1l9 9M10 1l-9 9" stroke="#bdbdbd" strokeWidth="1.500" /></svg>
          </Slot>
          <Slot w="w-[36px]">
            <svg width="13" height="12" viewBox="0 0 13 12"><path d="M1 7l4 4 7-10" fill="none" stroke="#bdbdbd" strokeWidth="1.500" /></svg>
          </Slot>
          <Slot w="w-[35px]" className="font-['Liberation_Serif',serif] text-[14px] italic text-[#555]">fx</Slot>
        </div>
        <div className="h-[27px] flex-1 border border-[#d4d4d4] bg-white" />
      </div>

      {/* 列标 */}
      <div className={`${GRID} h-[21px] shrink-0 bg-[#e6e6e6]`}>
        {COLS.map((c, i) => (
          <div
            key={c}
            className={`flex items-center justify-center border-r text-[15px] leading-none ${
              c === 'A' ? 'pr-[64px] ' : ''
            }${
              c === 'M'
                ? 'border-b-2 border-b-[#217346] border-r-[#8cc8a8] bg-[#9fd5b7] text-[#1e6b41]'
                : i >= 6 && i <= 13
                  ? 'border-b-2 border-b-[#217346] border-r-[#b9dcc8] bg-[#cfecdc] text-[#1e6b41]'
                  : 'border-b-2 border-b-[#ababab] border-r-[#c6c6c6] text-[#444]'
            }`}
          >
            {c}
          </div>
        ))}
      </div>

      <Sheet />

      {/* 工作表标签 */}
      <div className="flex h-[28px] shrink-0 items-start border-b border-t border-b-[#c0c0c0] border-t-[#a8a8a8] bg-[#e6e6e6]">
        <div className="ml-[4px] flex h-[24px] w-[68px] items-center justify-center border-b-2 border-l border-r border-[#9a9a9a] border-b-[#217346] bg-white text-[12.5px] text-[#217346]">
          Sheet1
        </div>
        <div className="ml-[33px] mt-[5px] flex h-[16px] w-[16px] items-center justify-center rounded-full border border-[#777] text-[13px] leading-none text-[#555]">+</div>
        <div className="ml-auto mt-[7px] flex flex-col gap-[2px]">
          <div className="h-[2px] w-[2px] bg-[#aaa]" />
          <div className="h-[2px] w-[2px] bg-[#aaa]" />
          <div className="h-[2px] w-[2px] bg-[#aaa]" />
          <div className="h-[2px] w-[2px] bg-[#aaa]" />
        </div>
        <div className="ml-[15px] mt-[6px] flex h-[15px] w-[655px] shrink-0 border border-[#ababab] bg-white">
          <div className="flex w-[14px] items-center justify-center border-r border-[#ababab]">
            <svg width="4" height="7" viewBox="0 0 4 7"><path d="M4 0v7L0 3.500z" fill="#555" /></svg>
          </div>
        </div>
      </div>

      {/* 状态栏 */}
      <div className="flex h-[22px] shrink-0 items-center bg-[#f1f1f1] text-[12px] text-[#666]">
        <div className="ml-[1190px] w-[133px] whitespace-nowrap">平均值: 79.5</div>
        <div className="w-[60px] whitespace-nowrap">计数: 20</div>
        <div className="w-[74px] whitespace-nowrap">最小值: 51</div>
        <div className="w-[70px] whitespace-nowrap">求和: 954</div>
        <Slot w="w-[38px]" className="bg-[#c6c6c6]">
          <svg width="14" height="13" viewBox="0 0 14 13"><path d="M.5.5h13v12H.5zM5 .5v12M9 .5v12M.5 4.500h13M.5 8.500h13" fill="none" stroke="#666" /></svg>
        </Slot>
        <Slot w="w-[38px]">
          <svg width="13" height="14" viewBox="0 0 13 14"><path d="M.5.5h12v13H.5zM3 3h7v8H3zM4 5h5M4 7h5M4 9h5" fill="none" stroke="#666" /></svg>
        </Slot>
        <Slot w="w-[38px]">
          <svg width="14" height="13" viewBox="0 0 14 13"><path d="M.5.5h13v12H.5zM4 .5v7h6v-7" fill="none" stroke="#666" /></svg>
        </Slot>
        <div className="ml-[6px] h-[2px] w-[6px] bg-[#555]" />
        <div className="relative ml-[3px] h-px flex-1 bg-[#999]">
          <div className="absolute left-[51px] top-[-7px] h-[15px] w-[3px] bg-[#666]" />
        </div>
      </div>

      <Taskbar />

      <MiniToolbar />
      <ContextMenu />

      {/* 鼠标 */}
      <svg className="absolute left-[1420px] top-[373px]" width="14" height="21" viewBox="0 0 14 21">
        <path d="M1 1v16l4-4 3 7 3-1-3-7h5z" fill="#fff" stroke="#222" />
      </svg>
    </div>
  )
}
